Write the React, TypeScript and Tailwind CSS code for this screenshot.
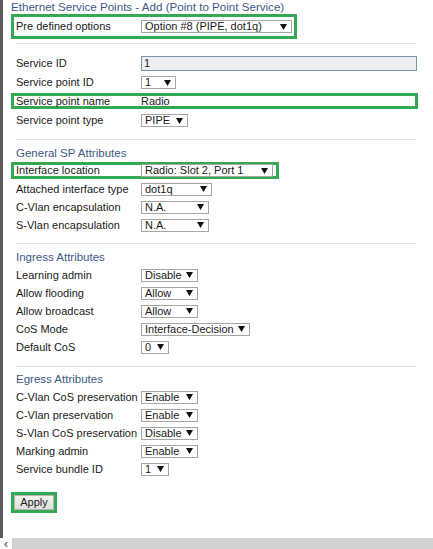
import React from 'react';

// Dropdown drawn as a plain box with a solid down triangle
const Dropdown: React.FC<{ value: string; className: string }> = ({ value, className }) => (
    <div className={`h-[13px] border border-[#a6a6a6] bg-white flex items-center justify-between pl-[3px] pr-[4px] text-[11px] leading-none text-[#1a1a1a] ${className}`}>
        <span className="whitespace-nowrap">{value}</span>
        <svg width="7" height="6" viewBox="0 0 7 6" className="shrink-0">
            <path d="M0 0 L7 0 L3.5 6 Z" fill="#111" />
        </svg>
    </div>
);

const Row: React.FC<{ label: string; children: React.ReactNode; className?: string }> = ({ label, children, className = 'h-[18px]' }) => (
    <div className={`flex items-center ${className}`}>
        <div className="w-[129px] shrink-0 pl-[4px] text-[11px] text-[#1a1a1a] whitespace-nowrap">{label}</div>
        {children}
    </div>
);

const Separator: React.FC<{ className: string }> = ({ className }) => (
    <div className={`ml-[4px] w-[400px] h-px bg-[#e2e2e2] ${className}`} />
);

const SectionTitle: React.FC<{ title: string; className: string }> = ({ title, className }) => (
    <div className={`h-[16px] flex items-center pl-[4px] text-[11.5px] text-[#3d5a86] ${className}`}>{title}</div>
);

const App: React.FC = () => {
    return (
        <div className="w-[433px] h-[549px] bg-white flex flex-col overflow-hidden font-['Liberation_Sans',Arial,sans-serif]">
            <div className="flex-1 flex">
                <div className="w-[3px] bg-[#5c5c5c]" />
                <div className="flex-1 pl-[9px]">
                    {/* Header */}
                    <div className="h-[14px] flex items-center -ml-[1px] text-[11.6px] text-[#3d5a86] leading-none whitespace-nowrap">
                        Ethernet Service Points - Add (Point to Point Service)
                    </div>

                    {/* Pre defined options */}
                    <div className="w-[286px] h-[25px] border-[3px] border-[#34a853] flex items-center -ml-px">
                        <div className="w-[127px] shrink-0 pl-[2px] text-[11px] text-[#1a1a1a] whitespace-nowrap">Pre defined options</div>
                        <Dropdown value="Option #8 (PIPE, dot1q)" className="w-[151px]" />
                    </div>

                    <Separator className="mt-[4px]" />

                    {/* Service */}
                    <Row label="Service ID" className="h-[19px] mt-[10px]">
                        <div className="w-[276px] h-[15px] border border-[#7d92a3] bg-[#efeff3] flex items-center pl-[2px] text-[11px] text-[#1a1a1a]">1</div>
                    </Row>
                    <Row label="Service point ID" className="h-[19px]">
                        <Dropdown value="1" className="w-[35px]" />
                    </Row>
                    <div className="w-[407px] h-[16px] mt-px border-[3px] border-[#34a853] flex items-center -ml-px">
                        <div className="w-[127px] shrink-0 pl-[2px] text-[11px] text-[#1a1a1a] whitespace-nowrap">Service point name</div>
                        <div className="text-[11px] text-[#1a1a1a] leading-none">Radio</div>
                    </div>
                    <Row label="Service point type" className="h-[19px] mt-[2px]">
                        <Dropdown value="PIPE" className="w-[47px]" />
                    </Row>

                    <Separator className="mt-[9px]" />

                    {/* General SP Attributes */}
                    <SectionTitle title="General SP Attributes" className="mt-[6px]" />
                    <div className="w-[268px] h-[17px] border-[3px] border-[#34a853] flex items-center -ml-px">
                        <div className="w-[127px] shrink-0 pl-[2px] text-[11px] text-[#1a1a1a] whitespace-nowrap">Interface location</div>
                        <Dropdown value="Radio: Slot 2, Port 1" className="w-[132px]" />
                    </div>
                    <Row label="Attached interface type" className="h-[18px] mt-px">
                        <Dropdown value="dot1q" className="w-[71px]" />
                    </Row>
                    <Row label="C-Vlan encapsulation">
                        <Dropdown value="N.A." className="w-[68px]" />
                    </Row>
                    <Row label="S-Vlan encapsulation">
                        <Dropdown value="N.A." className="w-[68px]" />
                    </Row>

                    <Separator className="mt-[9px]" />

                    {/* Ingress Attributes */}
                    <SectionTitle title="Ingress Attributes" className="mt-[6px]" />
                    <Row label="Learning admin">
                        <Dropdown value="Disable" className="w-[57px]" />
                    </Row>
                    <Row label="Allow flooding">
                        <Dropdown value="Allow" className="w-[57px]" />
                    </Row>
                    <Row label="Allow broadcast">
                        <Dropdown value="Allow" className="w-[57px]" />
                    </Row>
                    <Row label="CoS Mode">
                        <Dropdown value="Interface-Decision" className="w-[109px]" />
                    </Row>
                    <Row label="Default CoS">
                        <Dropdown value="0" className="w-[28px]" />
                    </Row>

                    <Separator className="mt-[10px]" />

                    {/* Egress Attributes */}
                    <SectionTitle title="Egress Attributes" className="mt-[5px]" />
                    <Row label="C-Vlan CoS preservation">
                        <Dropdown value="Enable" className="w-[57px]" />
                    </Row>
                    <Row label="C-Vlan preservation">
                        <Dropdown value="Enable" className="w-[57px]" />
                    </Row>
                    <Row label="S-Vlan CoS preservation">
                        <Dropdown value="Disable" className="w-[57px]" />
                    </Row>
                    <Row label="Marking admin">
                        <Dropdown value="Enable" className="w-[57px]" />
                    </Row>
                    <Row label="Service bundle ID">
                        <Dropdown value="1" className="w-[28px]" />
                    </Row>

                    {/* Apply */}
                    <div className="mt-[14px] -ml-[1px] w-[46px] h-[21px] border-[3px] border-[#34a853] flex">
                        <button className="flex-1 bg-gradient-to-b from-[#f4f4f4] to-[#dedede] border border-[#b5b5b5] text-[11px] text-[#1a1a1a] leading-none">
                            Apply
                        </button>
                    </div>
                </div>
            </div>

            {/* Horizontal scrollbar */}
            <div className="h-[11px] flex items-center">
                <div className="w-[12px] flex items-center justify-center text-[12px] text-[#444] leading-none">‹</div>
                <div className="flex-1 h-full bg-[#d2d2d2]" />
            </div>
        </div>
    );
};

export default App;
